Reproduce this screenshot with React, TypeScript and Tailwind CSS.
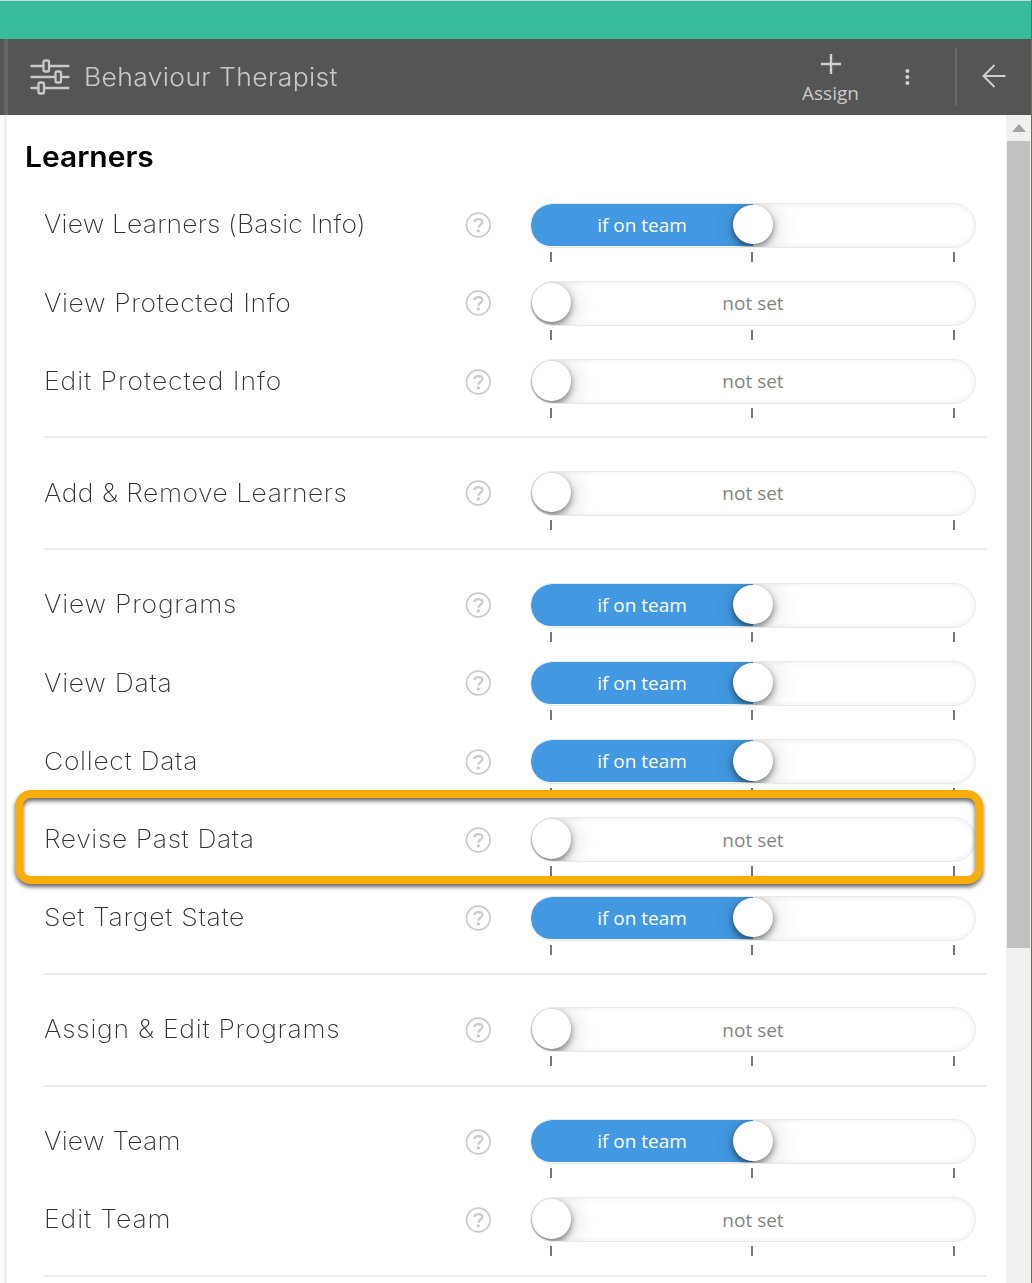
import React from "react";
import { clsx } from "clsx";

type Permission = {
  label: string;
  tracking: string;
  on?: boolean;
  twoStops?: boolean;
  highlighted?: boolean;
};

const groups: Permission[][] = [
  [
    { label: "View Learners (Basic Info)", tracking: "tracking-[0.16px]", on: true },
    { label: "View Protected Info", tracking: "tracking-[0.6px]" },
    { label: "Edit Protected Info", tracking: "tracking-[0.9px]" },
  ],
  [{ label: "Add & Remove Learners", tracking: "tracking-[0.47px]", twoStops: true }],
  [
    { label: "View Programs", tracking: "tracking-[0.74px]", on: true },
    { label: "View Data", tracking: "tracking-[0.7px]", on: true },
    { label: "Collect Data", tracking: "tracking-[0.65px]", on: true },
    { label: "Revise Past Data", tracking: "tracking-[0.57px]", highlighted: true },
    { label: "Set Target State", tracking: "tracking-[0.67px]", on: true },
  ],
  [{ label: "Assign & Edit Programs", tracking: "tracking-[0.7px]" }],
  [
    { label: "View Team", tracking: "tracking-[0.25px]", on: true },
    { label: "Edit Team", tracking: "tracking-[0.88px]" },
  ],
];

function SlidersIcon() {
  return (
    <svg width="40" height="36" viewBox="0 0 40 36" fill="none" stroke="#c9c9c9" strokeWidth="2.300" strokeLinecap="round">
      <path d="M1.500 7h11.500M19 7h19.500M1.500 18H25M31 18h7.500M1.500 29H8M14 29h24.500" />
      <rect x="13.500" y="1.500" width="5.500" height="11" rx="1.500" />
      <rect x="25.500" y="12.500" width="5.500" height="11" rx="1.500" />
      <rect x="8.500" y="23.500" width="5.500" height="11" rx="1.500" />
    </svg>
  );
}

function HelpIcon() {
  return (
    <svg width="26" height="26" viewBox="0 0 26 26" fill="none" stroke="#cbcbcb" strokeWidth="1.700">
      <circle cx="13.300" cy="13" r="11.800" />
      <path d="M9.200 9.900C9.600 8 11.100 7.100 13.300 7.100c2.500 0 4.100 1.200 4.100 3 0 2.700-4 2.600-4 5.600" strokeWidth="2.300" />
      <circle cx="13.300" cy="18.900" r="1.700" fill="#cbcbcb" stroke="none" />
    </svg>
  );
}

function Slider({ on, twoStops }: Permission) {
  return (
    <div className="relative h-[45px] w-[446px]">
      <div className="relative h-full w-full overflow-hidden rounded-full border border-[#e9e9e9] bg-white shadow-[inset_0_0_6px_rgba(0,0,0,0.08)]">
        {on ? (
          <div className="flex h-[42px] w-[222px] items-center justify-center rounded-l-[20px] bg-[#4299e1] pt-[1px] text-[19px] font-medium text-white">
            if on team
          </div>
        ) : (
          <div className="flex h-full items-center justify-center text-[19px] text-[#858585]">not set</div>
        )}
        <div
          className={clsx(
            "absolute top-[1px] size-[39.500px] rounded-full bg-white shadow-[0_3px_7px_rgba(0,0,0,0.5),3px_3px_26px_rgba(0,0,0,0.16)]",
            on ? "left-[202px]" : "left-[0.500px]",
          )}
        />
      </div>
      <div className="absolute top-[49px] left-[20px] flex w-[405px] justify-between">
        <i className="h-[10px] w-[2px] bg-[#777]" />
        {!twoStops && <i className="mr-[2px] h-[10px] w-[2px] bg-[#777]" />}
        <i className="h-[10px] w-[2px] bg-[#777]" />
      </div>
    </div>
  );
}

function Row(p: Permission) {
  return (
    <div className="relative flex h-[78.250px] items-center">
      <span className="w-[421px]">
        <span className={clsx("inline-block origin-left scale-x-[1.06] font-[Inter] text-[25px] font-[250] whitespace-nowrap text-[#333]", p.tracking)}>
          {p.label}
        </span>
      </span>
      <HelpIcon />
      <div className="ml-[39px]">
        <Slider {...p} />
      </div>
      {p.highlighted && (
        <div className="absolute -top-[11px] -left-[29px] z-10 h-[94px] w-[968px] rounded-[16px] border-8 border-[#f8ad0b] drop-shadow-[0_3px_2px_rgba(0,0,0,0.6)]" />
      )}
    </div>
  );
}

export default function App() {
  return (
    <div className="flex h-[1283px] w-[1032px] overflow-hidden bg-white font-['Open_Sans',sans-serif]">
      <div className="flex w-[1031px] shrink-0 flex-col">
        <div className="h-[39px] border-t border-[#c9dcd9] bg-[#36bb9b]" />
        <header className="flex h-[76px] items-center bg-[#555] text-[#c9c9c9]">
          <div className="ml-1 h-full w-1 bg-[#666]" />
          <div className="ml-[22px]">
            <SlidersIcon />
          </div>
          <h1 className="ml-[14px] flex-1 pt-[2px]">
            <span className="inline-block origin-left scale-x-[1.06] font-[Inter] text-[25px] font-light tracking-[0.33px]">
              Behaviour Therapist
            </span>
          </h1>
          <div className="flex w-[60px] flex-col items-center pt-[6px] pl-[1px]">
            <svg width="20" height="20" viewBox="0 0 20 20" stroke="#d0d0d0" strokeWidth="2.400">
              <path d="M10 0v20M0 10h20" />
            </svg>
            <span className="mt-[6px] text-[19px] leading-[26px]">Assign</span>
          </div>
          <svg className="ml-[44px]" width="6" height="18" viewBox="0 0 6 18" fill="#d0d0d0">
            <circle cx="3.400" cy="3" r="2" />
            <circle cx="3.400" cy="9" r="2" />
            <circle cx="3.400" cy="15" r="2" />
          </svg>
          <div className="-mt-[2px] ml-[45px] h-[57px] w-[2px] bg-[#696969]" />
          <svg className="-mt-[2px] mr-[25px] ml-[25px]" width="24" height="24" viewBox="0 0 24 24" fill="none" stroke="#d0d0d0" strokeWidth="2">
            <path d="M23.500 12H1.500M12.500 1L1.500 12l11 11" />
          </svg>
        </header>
        <div className="flex min-h-0 flex-1">
          <div className="w-1 bg-[#fcfcfc]" />
          <div className="w-[3px] bg-[#f0f0f0]" />
          <main className="flex-1 overflow-hidden pl-[18px]">
            <h2 className="flex h-[71px] items-start pt-[24px] font-[Inter] text-[28px] leading-[36px] font-semibold text-black">
              <span className="origin-left scale-x-[1.07]">Learners</span>
            </h2>
            <div className="w-[943px] pl-[19px]">
              {groups.map((group, i) => (
                <section key={i} className="mb-[16px] w-[943px] border-b-2 border-[#ececec] pb-[15.500px]">
                  {group.map((p) => (
                    <Row key={p.label} {...p} />
                  ))}
                </section>
              ))}
            </div>
          </main>
          <div className="flex w-[25px] flex-col items-center bg-[#f0f0f0]">
            <div className="flex h-[26px] items-center">
              <svg width="14" height="8" viewBox="0 0 14 8" fill="#a3a3a3">
                <path d="M0 8L7 0l7 8z" />
              </svg>
            </div>
            <div className="h-[807px] w-[23px] bg-[#c1c1c1]" />
          </div>
        </div>
      </div>
      <div className="w-px bg-[#6b6b62]" />
    </div>
  );
}
